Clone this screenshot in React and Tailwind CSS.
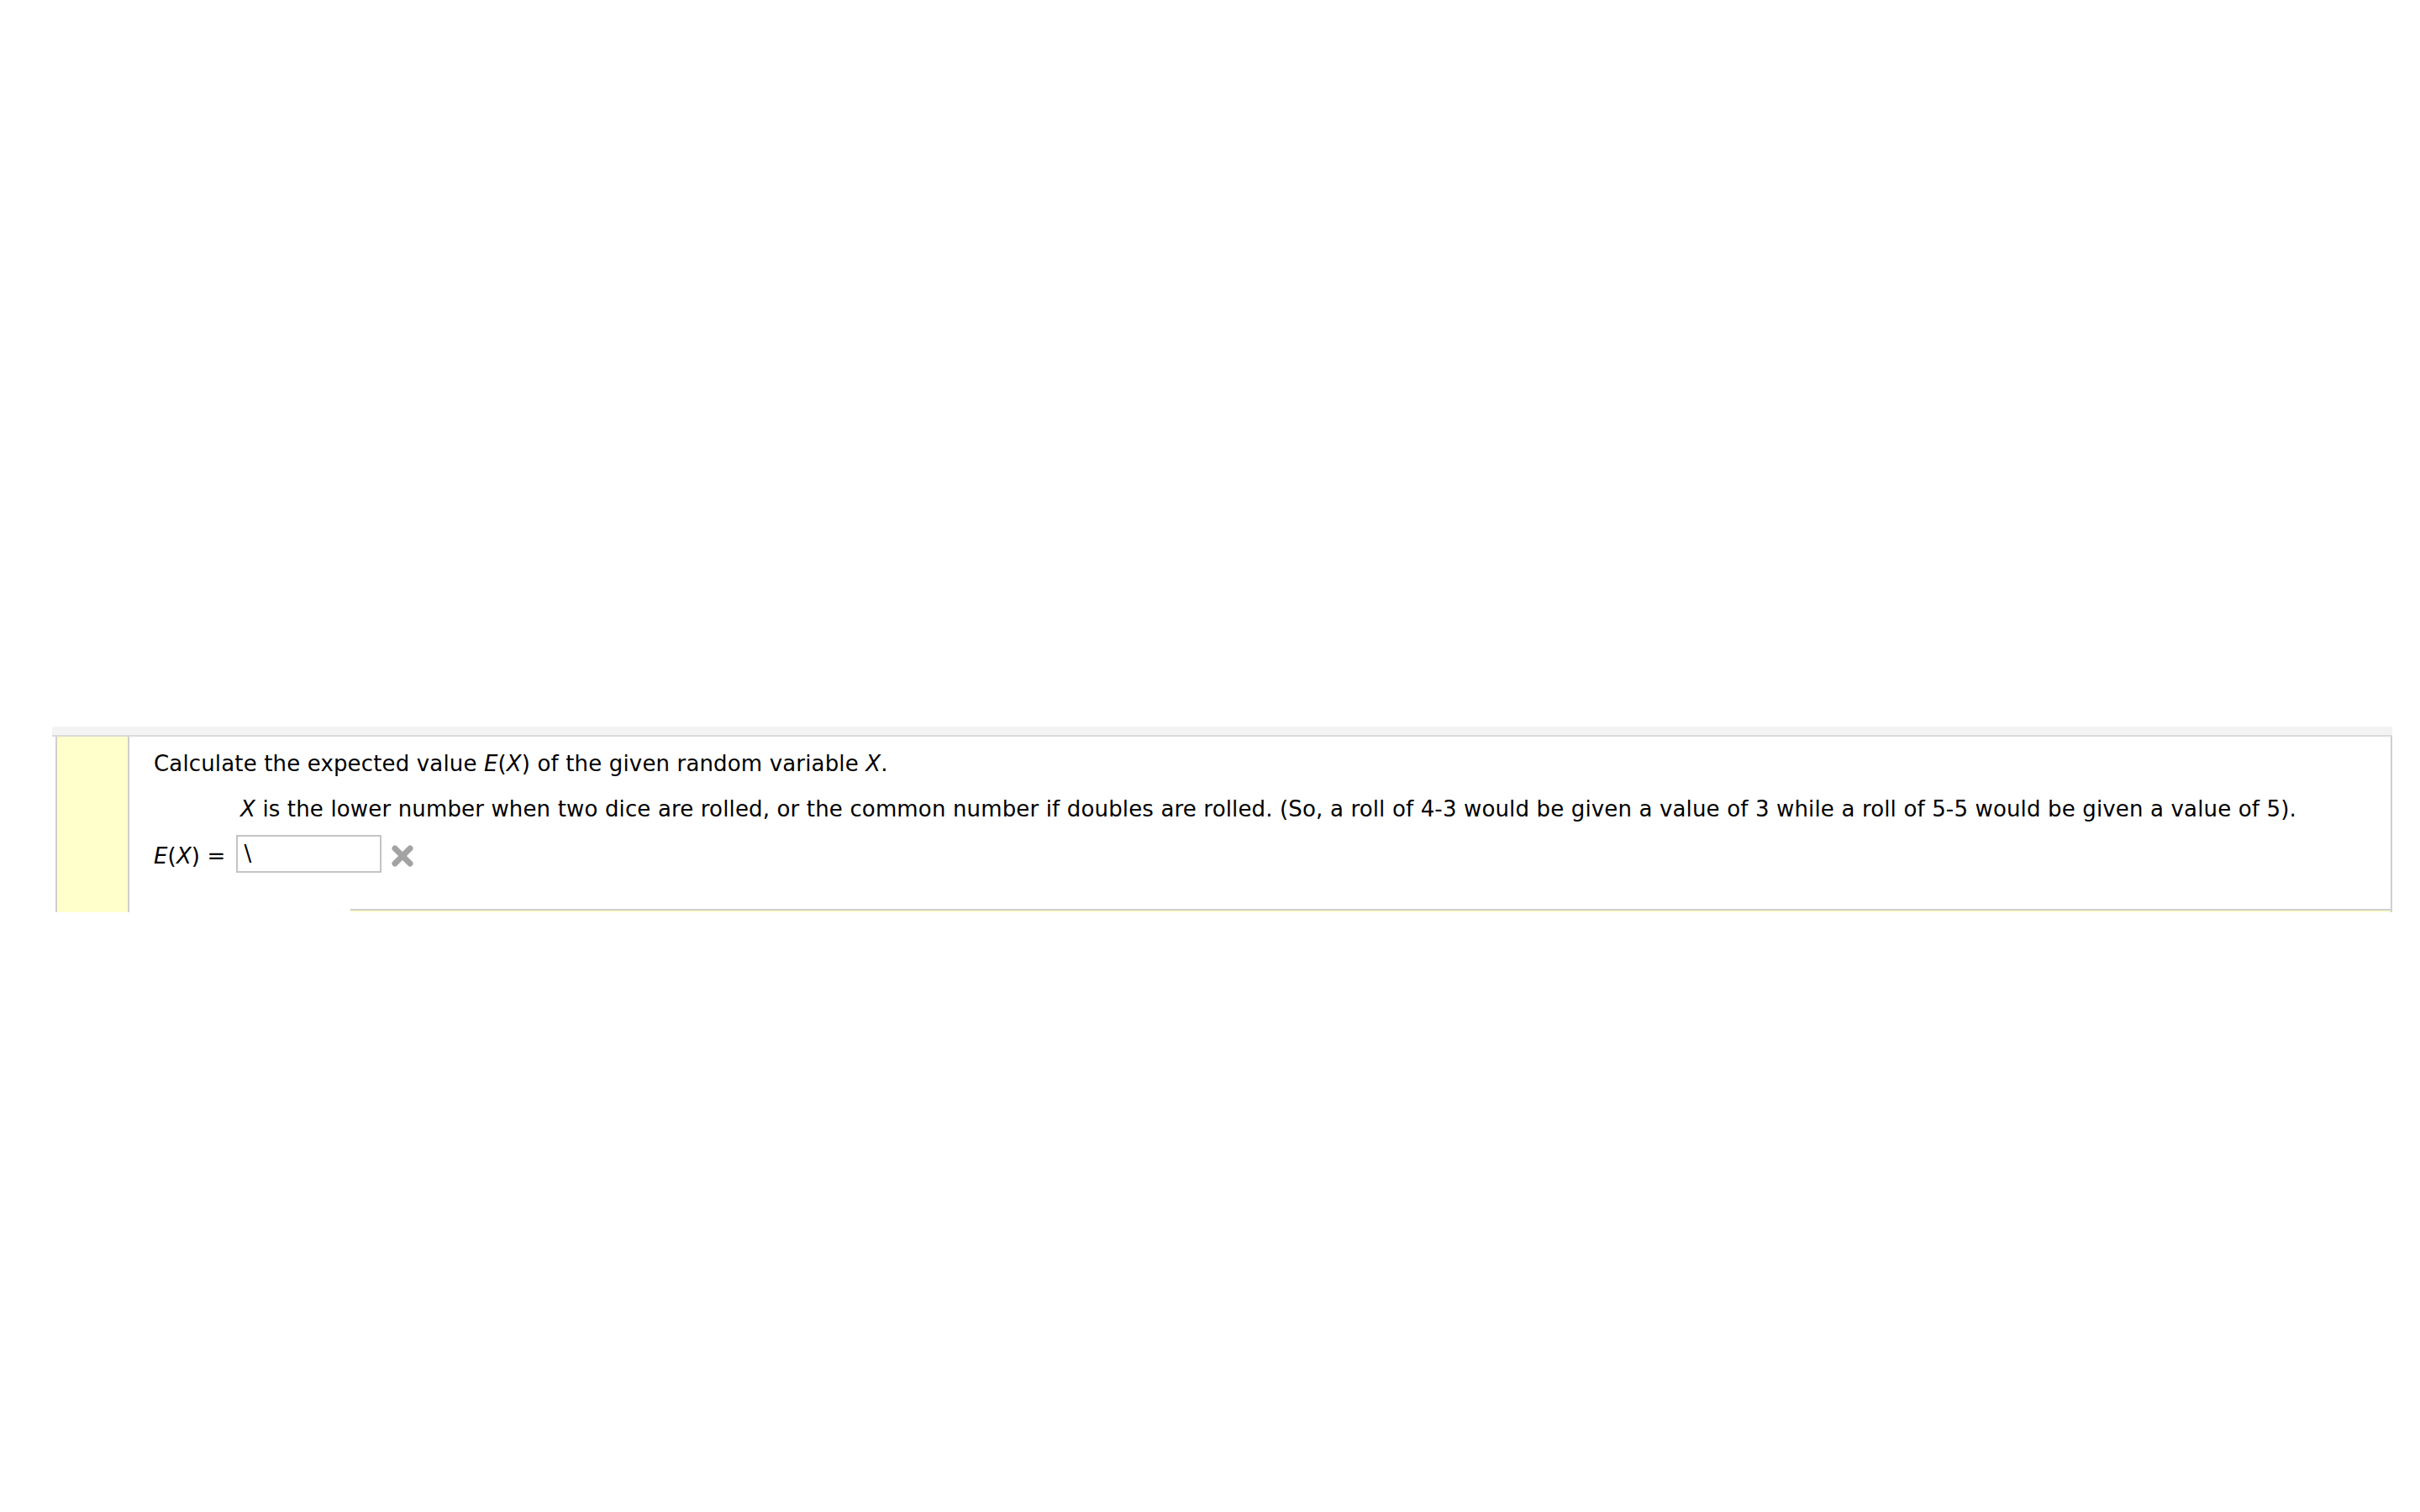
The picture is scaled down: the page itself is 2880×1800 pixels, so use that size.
export default function App() {
  return (
    <div className="min-h-[1800px] bg-white pt-[865px] pl-[62px] text-black" style={{ fontFamily: '"DejaVu Sans", Verdana, sans-serif' }}>
      <div className="w-[2785px] h-[221px] overflow-hidden flex flex-col">
        <div className="h-[12px] shrink-0 bg-[#f3f3f3] border-b-2 border-[#dadada] rounded-tl-[3px]" />
        <div className="flex flex-1 ml-[4px]">
          <div className="w-[88px] shrink-0 bg-[#ffffcc] border-l-2 border-r-2 border-[#cfcfcf]" />
          <div className="flex-1 flex flex-col border-r-2 border-[#cfcfcf] pl-[29px] pt-[14px] text-[26px] leading-[36px] tracking-[0.15px]">
            <p>
              Calculate the expected value <i>E</i>(<i>X</i>) of the given random variable <i>X</i>.
            </p>
            <p className="mt-[18px] pl-[103px]">
              <i>X</i> is the lower number when two dice are rolled, or the common number if doubles are rolled. (So, a roll of 4-3 would be given a value of 3 while a roll of 5-5 would be given a value of 5).
            </p>
            <div className="mt-[13px] flex items-start">
              <span className="mt-[7px]">
                <i>E</i>(<i>X</i>) =
              </span>
              <div className="ml-[12px] w-[173px] h-[45px] border-2 border-[#c4c4c4] pl-[8px] leading-[41px]">\</div>
              <svg className="ml-[11px] mt-[11px]" width="28" height="28" viewBox="0 0 28 28">
                <path d="M5 5 L23 23 M23 5 L5 23" stroke="#a3a3a3" strokeWidth="7" strokeLinecap="round" />
              </svg>
            </div>
            <div className="flex-1" />
            <div className="ml-[234px] h-[4px] shrink-0 border-t-2 border-[#cfcfcf] bg-[#ffffcc]" />
          </div>
        </div>
      </div>
    </div>
  );
}
